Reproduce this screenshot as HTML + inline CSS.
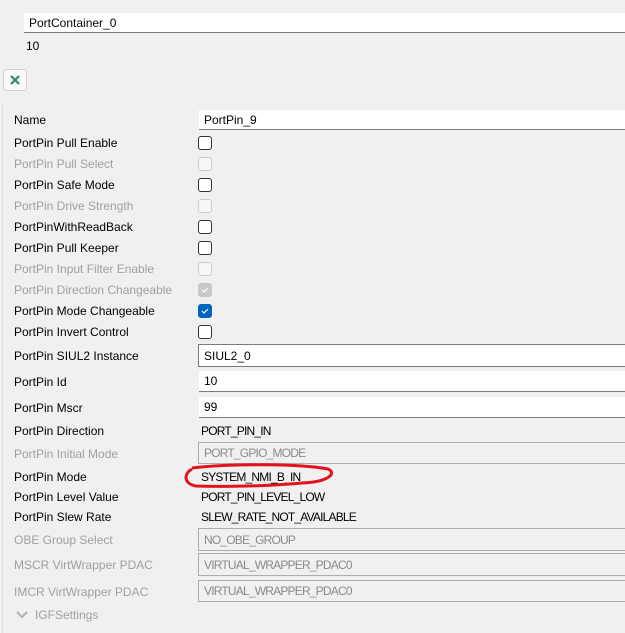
<!DOCTYPE html>
<html><head><meta charset="utf-8"><style>
body{margin:0;width:625px;height:633px;background:#f0f0f0;font-family:"Liberation Sans",sans-serif;font-size:12px;color:#000;position:relative;overflow:hidden}
.a{position:absolute;white-space:nowrap}
.l{left:14px}
.d{color:#a0a0a0}
.u{letter-spacing:-0.8px}
.in{position:absolute;background:#fff;box-sizing:border-box;padding-left:5px;display:flex;align-items:center}
.cb{position:absolute;left:198px;width:12px;height:12px;border:1px solid #333;border-radius:3px;background:#fff}
.cbd{border-color:#ccc;background:#f7f7f7}
.ro{position:absolute;left:198px;right:-2px;box-sizing:border-box;border:1px solid #adadad;color:#8a8a8a;padding-left:5px;display:flex;align-items:center;letter-spacing:-0.8px}
</style></head><body>
<div class="in" style="left:24px;top:13px;width:601px;height:20px;border-bottom:1px solid #7a7a7a">PortContainer_0</div>
<div class="a" style="left:26px;top:39px">10</div>
<div class="a" style="left:3px;top:69px;width:24px;height:22px;border:1px solid #d0d0d0;border-radius:3px;background:#f8f8f8;box-sizing:border-box">
<svg width="22" height="20" viewBox="0 0 22 20"><path d="M7 6l8 8M15 6l-8 8" stroke="#2e8b6e" stroke-width="2.2"/></svg></div>
<div class="a" style="left:2px;top:104px;width:1px;height:529px;background:#dcdcdc"></div>
<div class="a l" style="top:113px">Name</div>
<div class="in" style="left:199px;top:110px;width:426px;height:20px;border-bottom:1px solid #7a7a7a">PortPin_9</div>
<div class="a l" style="top:136px">PortPin Pull Enable</div><div class="cb" style="top:136px"></div>
<div class="a l d" style="top:157px">PortPin Pull Select</div><div class="cb cbd" style="top:157px"></div>
<div class="a l" style="top:178px">PortPin Safe Mode</div><div class="cb" style="top:178px"></div>
<div class="a l d" style="top:199px">PortPin Drive Strength</div><div class="cb cbd" style="top:199px"></div>
<div class="a l" style="top:220px">PortPinWithReadBack</div><div class="cb" style="top:220px"></div>
<div class="a l" style="top:241px">PortPin Pull Keeper</div><div class="cb" style="top:241px"></div>
<div class="a l d" style="top:262px">PortPin Input Filter Enable</div><div class="cb cbd" style="top:262px"></div>
<div class="a l d" style="top:283px">PortPin Direction Changeable</div><div class="cb" style="top:283px;border-color:#c8c8c8;background:#c8c8c8"><svg width="12" height="12" style="position:absolute;left:0;top:0"><path d="M3 6l2 2 4-4" stroke="#fff" fill="none" stroke-width="1.2"/></svg></div>
<div class="a l" style="top:304px">PortPin Mode Changeable</div><div class="cb" style="top:304px;border-color:#0067c0;background:#0067c0"><svg width="12" height="12" style="position:absolute;left:0;top:0"><path d="M3 6l2 2 4-4" stroke="#fff" fill="none" stroke-width="1.2"/></svg></div>
<div class="a l" style="top:325px">PortPin Invert Control</div><div class="cb" style="top:325px"></div>
<div class="a l" style="top:349px">PortPin SIUL2 Instance</div>
<div class="in" style="left:198px;top:344px;width:430px;height:23px;border:1px solid #7a7a7a">SIUL2_0</div>
<div class="a l" style="top:375px">PortPin Id</div>
<div class="in" style="left:199px;top:371px;width:426px;height:21px;border-bottom:1px solid #7a7a7a">10</div>
<div class="a l" style="top:401px">PortPin Mscr</div>
<div class="in" style="left:199px;top:397px;width:426px;height:21px;border-bottom:1px solid #7a7a7a">99</div>
<div class="a l" style="top:424px">PortPin Direction</div><div class="a u" style="left:201px;top:424px">PORT_PIN_IN</div>
<div class="a l d" style="top:447px">PortPin Initial Mode</div><div class="ro" style="top:442px;height:22px">PORT_GPIO_MODE</div>
<div class="a l" style="top:470px">PortPin Mode</div><div class="a u" style="left:201px;top:470px">SYSTEM_NMI_B_IN</div>
<svg class="a" style="left:182px;top:462px" width="155" height="30"><path d="M10 6C50 1 120 2 146 7C155 11 147 20 120 21C90 24 40 25 14 24C2 22 1 12 10 7" stroke="#e0141e" stroke-width="3" fill="none"/></svg>
<div class="a l" style="top:490px">PortPin Level Value</div><div class="a u" style="left:201px;top:490px">PORT_PIN_LEVEL_LOW</div>
<div class="a l" style="top:510px">PortPin Slew Rate</div><div class="a u" style="left:201px;top:510px">SLEW_RATE_NOT_AVAILABLE</div>
<div class="a l d" style="top:533px">OBE Group Select</div><div class="ro" style="top:528px;height:23px">NO_OBE_GROUP</div>
<div class="a l d" style="top:558px">MSCR VirtWrapper PDAC</div><div class="ro" style="top:553px;height:23px">VIRTUAL_WRAPPER_PDAC0</div>
<div class="a l d" style="top:585px">IMCR VirtWrapper PDAC</div><div class="ro" style="top:580px;height:22px">VIRTUAL_WRAPPER_PDAC0</div>
<svg class="a" style="left:16px;top:611px" width="12" height="8"><path d="M1 1l5 5 5-5" stroke="#b0b0b0" stroke-width="2" fill="none"/></svg>
<div class="a d" style="left:35px;top:608px">IGFSettings</div>
</body></html>
